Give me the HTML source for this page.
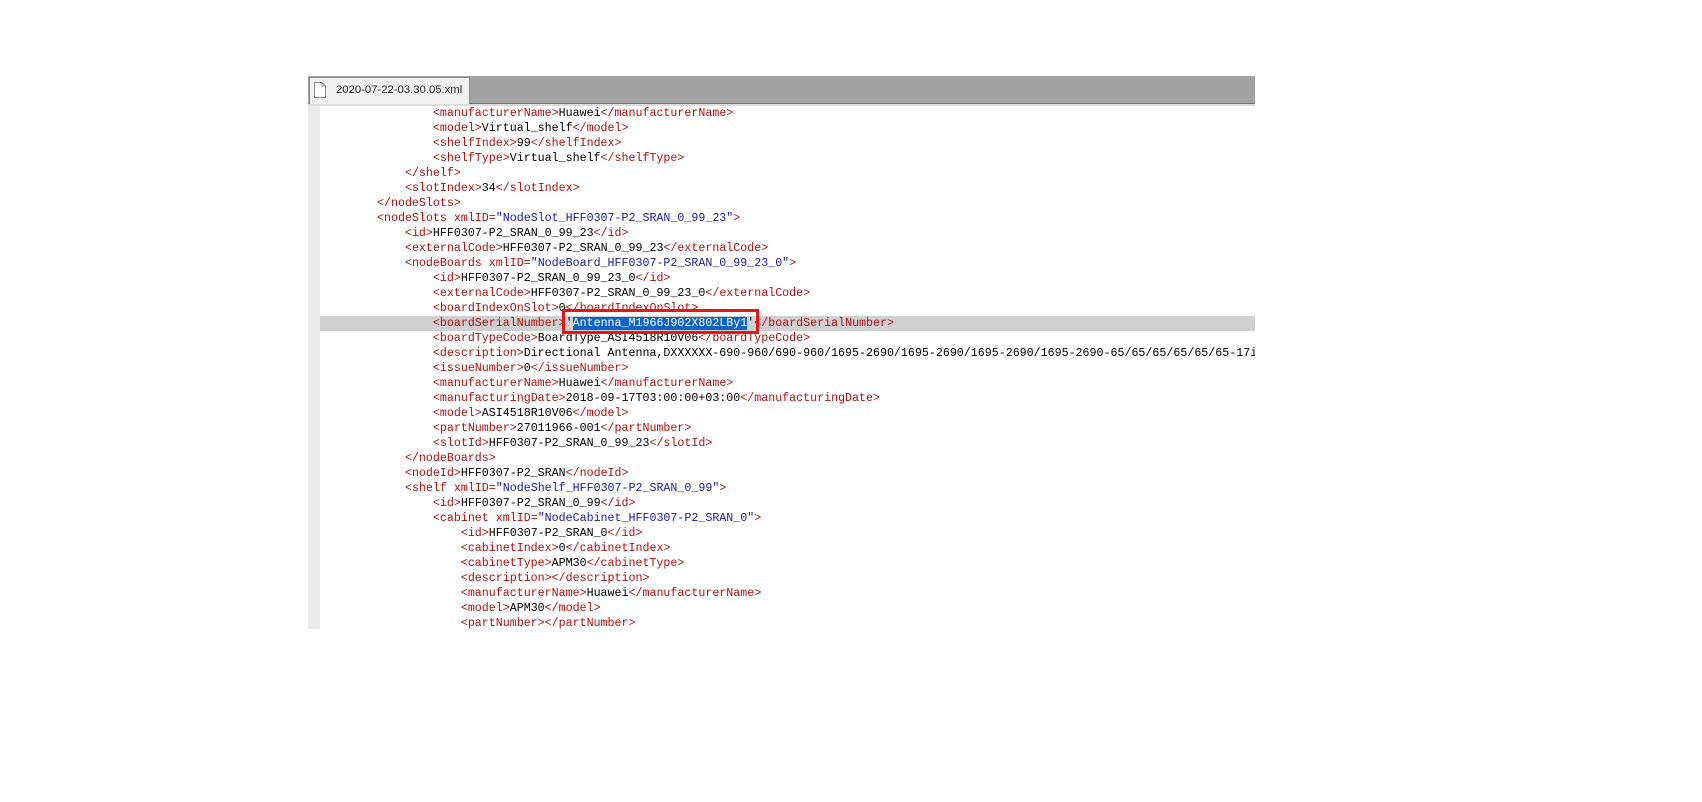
<!DOCTYPE html>
<html><head><style>
body{margin:0;width:1702px;height:802px;background:#fff;position:relative;overflow:hidden}
.bar{position:absolute;left:308px;top:76px;width:947px;height:27px;background:#a3a3a3;border-bottom:1px solid #777}
.strip{position:absolute;left:308px;top:104px;width:947px;height:2px;background:#ddd}
.tab{position:absolute;left:309px;top:77px;width:161px;height:27px;background:#f2f2f2;border:1px solid #888;border-bottom:none;box-sizing:border-box;font:11.3px "Liberation Sans",sans-serif;color:#222;white-space:nowrap}
.tab span{position:absolute;left:26px;top:6px}
.gut{position:absolute;left:308px;top:106px;width:12px;height:523px;background:#ececec}
.code{position:absolute;left:320px;top:106px;width:935px;height:523px;overflow:hidden;font:11.65px/15px "Liberation Mono",monospace;color:#000}
.l{height:15px;padding-left:57px;white-space:pre}
.hl{background:#d0d0d0}
t{color:#b01010}
a{color:#1a1aa6}
.sel{background:#0a64c8;color:#fff}
.box{position:absolute;left:562px;top:309px;width:197px;height:25px;border:3px solid #e01818;box-sizing:border-box}
</style></head><body>
<div class="bar"></div><div class="strip"></div>
<div class="tab"><svg style="position:absolute;left:3px;top:3px" width="14" height="18"><path d="M1.5 1.5H9L12.5 5V16.5H1.5Z M9 1.5V5H12.5" fill="#fff" stroke="#888"/></svg><span>2020-07-22-03.30.05.xml</span></div>
<div class="gut"></div>
<div class="code"><div class="l">        <t>&lt;manufacturerName&gt;</t>Huawei<t>&lt;/manufacturerName&gt;</t></div><div class="l">        <t>&lt;model&gt;</t>Virtual_shelf<t>&lt;/model&gt;</t></div><div class="l">        <t>&lt;shelfIndex&gt;</t>99<t>&lt;/shelfIndex&gt;</t></div><div class="l">        <t>&lt;shelfType&gt;</t>Virtual_shelf<t>&lt;/shelfType&gt;</t></div><div class="l">    <t>&lt;/shelf&gt;</t></div><div class="l">    <t>&lt;slotIndex&gt;</t>34<t>&lt;/slotIndex&gt;</t></div><div class="l"><t>&lt;/nodeSlots&gt;</t></div><div class="l"><t>&lt;nodeSlots </t><t>xmlID=</t><a>"NodeSlot_HFF0307-P2_SRAN_0_99_23"</a><t>&gt;</t></div><div class="l">    <t>&lt;id&gt;</t>HFF0307-P2_SRAN_0_99_23<t>&lt;/id&gt;</t></div><div class="l">    <t>&lt;externalCode&gt;</t>HFF0307-P2_SRAN_0_99_23<t>&lt;/externalCode&gt;</t></div><div class="l">    <t>&lt;nodeBoards </t><t>xmlID=</t><a>"NodeBoard_HFF0307-P2_SRAN_0_99_23_0"</a><t>&gt;</t></div><div class="l">        <t>&lt;id&gt;</t>HFF0307-P2_SRAN_0_99_23_0<t>&lt;/id&gt;</t></div><div class="l">        <t>&lt;externalCode&gt;</t>HFF0307-P2_SRAN_0_99_23_0<t>&lt;/externalCode&gt;</t></div><div class="l">        <t>&lt;boardIndexOnSlot&gt;</t>0<t>&lt;/boardIndexOnSlot&gt;</t></div><div class="l hl">        <t>&lt;boardSerialNumber&gt;</t>'<span class="sel">Antenna_M1966J902X802LBy1</span>'<t>&lt;/boardSerialNumber&gt;</t></div><div class="l">        <t>&lt;boardTypeCode&gt;</t>BoardType_ASI4518R10V06<t>&lt;/boardTypeCode&gt;</t></div><div class="l">        <t>&lt;description&gt;</t>Directional Antenna,DXXXXXX-690-960/690-960/1695-2690/1695-2690/1695-2690/1695-2690-65/65/65/65/65/65-17i</div><div class="l">        <t>&lt;issueNumber&gt;</t>0<t>&lt;/issueNumber&gt;</t></div><div class="l">        <t>&lt;manufacturerName&gt;</t>Huawei<t>&lt;/manufacturerName&gt;</t></div><div class="l">        <t>&lt;manufacturingDate&gt;</t>2018-09-17T03:00:00+03:00<t>&lt;/manufacturingDate&gt;</t></div><div class="l">        <t>&lt;model&gt;</t>ASI4518R10V06<t>&lt;/model&gt;</t></div><div class="l">        <t>&lt;partNumber&gt;</t>27011966-001<t>&lt;/partNumber&gt;</t></div><div class="l">        <t>&lt;slotId&gt;</t>HFF0307-P2_SRAN_0_99_23<t>&lt;/slotId&gt;</t></div><div class="l">    <t>&lt;/nodeBoards&gt;</t></div><div class="l">    <t>&lt;nodeId&gt;</t>HFF0307-P2_SRAN<t>&lt;/nodeId&gt;</t></div><div class="l">    <t>&lt;shelf </t><t>xmlID=</t><a>"NodeShelf_HFF0307-P2_SRAN_0_99"</a><t>&gt;</t></div><div class="l">        <t>&lt;id&gt;</t>HFF0307-P2_SRAN_0_99<t>&lt;/id&gt;</t></div><div class="l">        <t>&lt;cabinet </t><t>xmlID=</t><a>"NodeCabinet_HFF0307-P2_SRAN_0"</a><t>&gt;</t></div><div class="l">            <t>&lt;id&gt;</t>HFF0307-P2_SRAN_0<t>&lt;/id&gt;</t></div><div class="l">            <t>&lt;cabinetIndex&gt;</t>0<t>&lt;/cabinetIndex&gt;</t></div><div class="l">            <t>&lt;cabinetType&gt;</t>APM30<t>&lt;/cabinetType&gt;</t></div><div class="l">            <t>&lt;description&gt;&lt;/description&gt;</t></div><div class="l">            <t>&lt;manufacturerName&gt;</t>Huawei<t>&lt;/manufacturerName&gt;</t></div><div class="l">            <t>&lt;model&gt;</t>APM30<t>&lt;/model&gt;</t></div><div class="l">            <t>&lt;partNumber&gt;&lt;/partNumber&gt;</t></div></div>
<div class="box"></div>
</body></html>
